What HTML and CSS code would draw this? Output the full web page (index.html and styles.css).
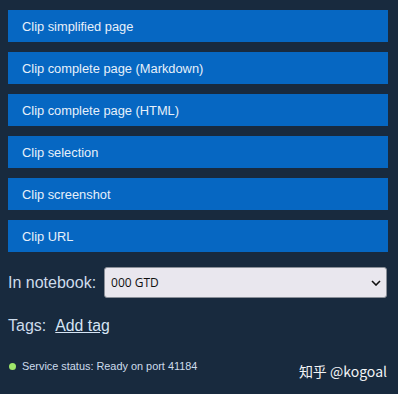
FILE: index.html
```html
<!DOCTYPE html>
<html>
<head>
<meta charset="utf-8">
<link rel="stylesheet" href="styles.css">
</head>
<body>
<div class="popup">
  <div class="buttons">
    <a class="btn">Clip simplified page</a>
    <a class="btn">Clip complete page (Markdown)</a>
    <a class="btn">Clip complete page (HTML)</a>
    <a class="btn">Clip selection</a>
    <a class="btn">Clip screenshot</a>
    <a class="btn">Clip URL</a>
  </div>
  <div class="notebook-row">
    <span class="label">In notebook:</span>
    <div class="select">
      <span>000 GTD</span>
      <svg class="chev" width="10" height="6" viewBox="0 0 10 6"><path d="M1 1 L5 5 L9 1" fill="none" stroke="#111" stroke-width="1.6"/></svg>
    </div>
  </div>
  <div class="tags-row">
    <span class="label">Tags:</span>
    <a class="add-tag">Add tag</a>
  </div>
  <div class="status-row">
    <div class="status">
      <span class="dot"></span>
      <span>Service status: Ready on port 41184</span>
    </div>
    <span class="mark">知乎 @kogoal</span>
  </div>
</div>
</body>
</html>
```
FILE: styles.css
```css
html, body {
  margin: 0;
  padding: 0;
  background: #182a3e;
}
body {
  font-family: "Liberation Sans", Arial, sans-serif;
  width: 398px;
  height: 394px;
  overflow: hidden;
}
.popup {
  padding: 10px 10px 0 8px;
}
.buttons {
  display: flex;
  flex-direction: column;
  gap: 10px;
}
.btn {
  display: flex;
  align-items: center;
  height: 32px;
  width: 380px;
  box-sizing: border-box;
  padding-left: 14px;
  background: #0667c2;
  color: #e6f0fa;
  font-size: 12.85px;
}
.notebook-row {
  display: flex;
  align-items: center;
  margin-top: 15px;
  height: 31px;
}
.label {
  color: #cddcec;
  font-size: 16px;
}
.select {
  margin-left: 8px;
  width: 283px;
  height: 31px;
  box-sizing: border-box;
  border: 1px solid #8a8f98;
  border-radius: 3px;
  background: #e9e7ee;
  display: flex;
  align-items: center;
  justify-content: space-between;
  padding: 0 5px 0 6px;
  font-family: "Open Sans", "DejaVu Sans", sans-serif;
  font-size: 12px;
  color: #111;
}
.chev {
  display: block;
}
.tags-row {
  display: flex;
  align-items: center;
  margin-top: 19px;
  height: 18px;
}
.add-tag {
  margin-left: 9px;
  color: #d6e5f5;
  font-size: 15.8px;
  text-decoration: underline;
}
.status-row {
  display: flex;
  align-items: center;
  justify-content: space-between;
  margin-top: 22px;
  padding-right: 1px;
}
.status {
  display: flex;
  align-items: center;
  gap: 6px;
  color: #cddcec;
  font-size: 10.9px;
  margin-top: -6px;
}
.dot {
  width: 7px;
  height: 7px;
  border-radius: 50%;
  background: #9ee66a;
  margin-left: 1px;
}
.mark {
  font-family: "Noto Sans CJK SC", "Noto Sans", sans-serif;
  font-size: 14px;
  color: #f2f4f6;
  margin-top: 4px;
}
```
